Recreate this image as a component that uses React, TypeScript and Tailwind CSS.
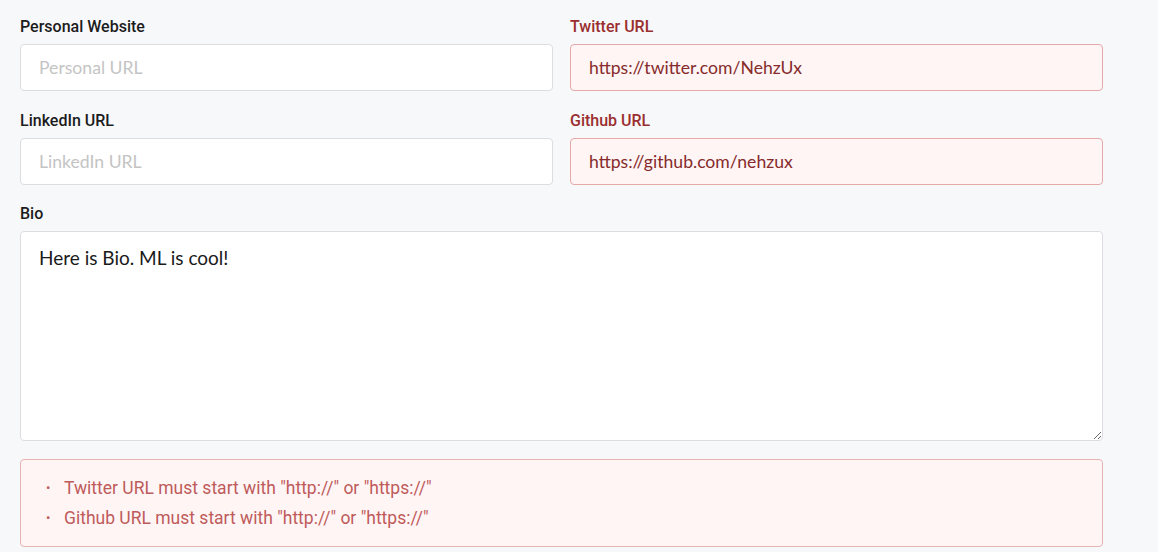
import React, { useState } from 'react';

const labelBase = "block text-[16px] leading-[20px] font-medium mb-[7px] [font-family:Roboto,'Liberation_Sans',sans-serif]";
const inputBase =
  "block w-full h-[47px] rounded-[4px] border px-[18px] text-[17.6px] [font-family:Lato,'Liberation_Sans',sans-serif] outline-none";

function Field({
  label,
  value,
  placeholder,
  invalid,
  onChange,
}: {
  label: string;
  value: string;
  placeholder: string;
  invalid?: boolean;
  onChange: (v: string) => void;
}) {
  return (
    <div>
      <label className={`${labelBase} ${invalid ? 'text-[#9a2e2e]' : 'text-[#1c1c1c]'}`}>{label}</label>
      <input
        value={value}
        placeholder={placeholder}
        onChange={(e) => onChange(e.target.value)}
        className={`${inputBase} ${
          invalid
            ? 'bg-[#fff5f5] border-[#e6a9a9] text-[#862b2b]'
            : 'bg-white border-[#dcdde0] text-[#212529] placeholder:text-[#c4c4c4]'
        }`}
      />
    </div>
  );
}

export default function App() {
  const [personal, setPersonal] = useState('');
  const [twitter, setTwitter] = useState('https://twitter.com/NehzUx');
  const [linkedin, setLinkedin] = useState('');
  const [github, setGithub] = useState('https://github.com/nehzux');
  const [bio, setBio] = useState('Here is Bio. ML is cool!');

  const errors = [
    'Twitter URL must start with "http://" or "https://"',
    'Github URL must start with "http://" or "https://"',
  ];

  return (
    <div className="min-h-[552px] bg-[#f7f8fa] pl-[20px] pt-[17px] pb-[5px]">
      <div className="w-[1083px]">
        <div className="grid grid-cols-2 gap-x-[17px] gap-y-[20px]">
          <Field label="Personal Website" placeholder="Personal URL" value={personal} onChange={setPersonal} />
          <Field label="Twitter URL" placeholder="Twitter URL" value={twitter} onChange={setTwitter} invalid />
          <Field label="LinkedIn URL" placeholder="LinkedIn URL" value={linkedin} onChange={setLinkedin} />
          <Field label="Github URL" placeholder="Github URL" value={github} onChange={setGithub} invalid />
        </div>

        <div className="mt-[19px]">
          <label className={`${labelBase} text-[#1c1c1c]`}>Bio</label>
          <textarea
            value={bio}
            onChange={(e) => setBio(e.target.value)}
            className="block w-full h-[210px] rounded-[4px] border border-[#dcdde0] bg-white px-[18px] py-[13px] text-[19px] leading-[25px] text-[#1a1a1a] [font-family:Lato,'Liberation_Sans',sans-serif] outline-none"
          />
        </div>

        <div className="mt-[18px] rounded-[4px] border border-[#e8b3b3] bg-[#fff5f5] py-[13px]">
          <ul className="[font-family:Roboto,'Liberation_Sans',sans-serif] text-[17.5px] leading-[30px] text-[#be5b5b]">
            {errors.map((err) => (
              <li key={err} className="flex">
                <span className="w-[43px] pl-[25px] text-[13px]">•</span>
                <span>{err}</span>
              </li>
            ))}
          </ul>
        </div>
      </div>
    </div>
  );
}
